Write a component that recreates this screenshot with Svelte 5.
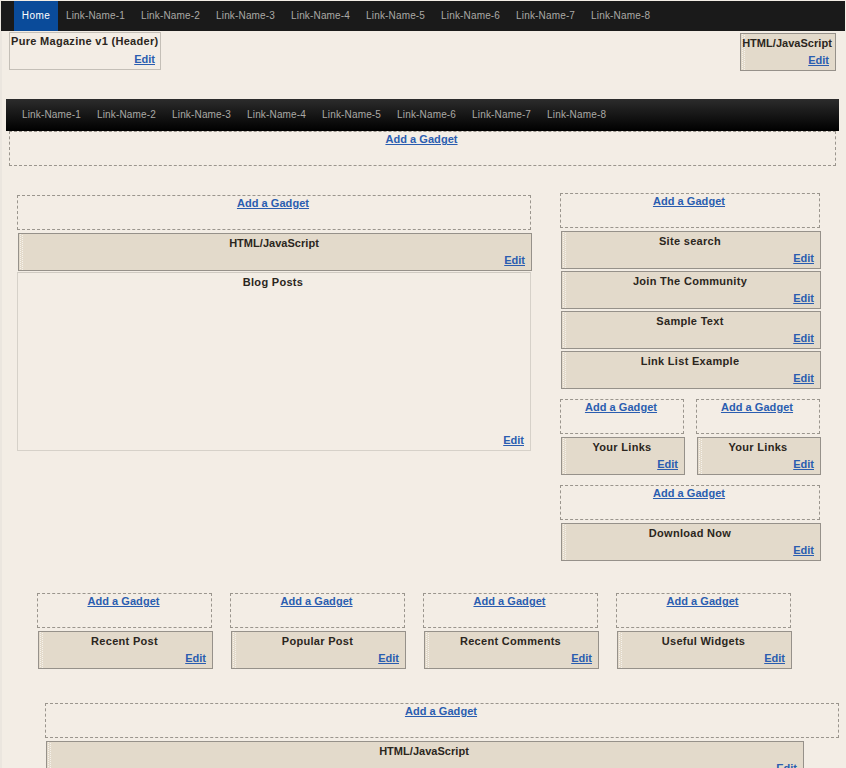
<script>
  const links = ['Link-Name-1', 'Link-Name-2', 'Link-Name-3', 'Link-Name-4', 'Link-Name-5', 'Link-Name-6', 'Link-Name-7', 'Link-Name-8'];
  const sideTop = ['Site search', 'Join The Community', 'Sample Text', 'Link List Example'];
  const footer = ['Recent Post', 'Popular Post', 'Recent Comments', 'Useful Widgets'];
</script>

{#snippet addGadget()}
  <div class="add"><a href="#add">Add a Gadget</a></div>
{/snippet}

{#snippet widget(title)}
  <div class="widget">
    <div class="title" class:tight={title === 'HTML/JavaScript'}>{title}</div>
    <a class="edit" href="#edit">Edit</a>
  </div>
{/snippet}

<div class="page">
  <nav class="topnav">
    <a class="home" href="#home">Home</a>
    {#each links as link}
      <a href="#link">{link}</a>
    {/each}
  </nav>

  <div class="head">
    <div class="header-box">
      <div class="title">Pure Magazine v1 (Header)</div>
      <a class="edit" href="#edit">Edit</a>
    </div>
    <div class="head-widget">
      {@render widget('HTML/JavaScript')}
    </div>
  </div>

  <nav class="subnav">
    {#each links as link}
      <a href="#link">{link}</a>
    {/each}
  </nav>

  <div class="cross">
    {@render addGadget()}
  </div>

  <div class="main">
    <div class="left">
      {@render addGadget()}
      {@render widget('HTML/JavaScript')}
      <div class="posts">
        <div class="title">Blog Posts</div>
        <a class="edit" href="#edit">Edit</a>
      </div>
    </div>

    <div class="right">
      {@render addGadget()}
      <div class="stack">
        {#each sideTop as title}
          {@render widget(title)}
        {/each}
      </div>
      <div class="pair">
        <div class="col">
          {@render addGadget()}
          {@render widget('Your Links')}
        </div>
        <div class="col">
          {@render addGadget()}
          {@render widget('Your Links')}
        </div>
      </div>
      <div class="col lower">
        {@render addGadget()}
        {@render widget('Download Now')}
      </div>
    </div>
  </div>

  <div class="footer">
    {#each footer as title}
      <div class="col">
        {@render addGadget()}
        {@render widget(title)}
      </div>
    {/each}
  </div>

  <div class="bottom">
    {@render addGadget()}
    <div class="bottom-widget">
      {@render widget('HTML/JavaScript')}
    </div>
  </div>
</div>

<style>
  :global(body) {
    margin: 0;
    background: #f3ede5;
  }

  .page {
    width: 846px;
    height: 768px;
    overflow: hidden;
    box-sizing: border-box;
    padding-top: 1px;
    background: #f3ede5;
    box-shadow: inset 2px 0 #ebe6df;
    font-family: "Liberation Sans", Arial, sans-serif;
    font-size: 11px;
    color: #2b2620;
  }

  a {
    text-decoration: none;
  }

  .topnav {
    display: flex;
    height: 30px;
    margin: 0 1px;
    padding-left: 13px;
    background: #1a1a1a;
  }

  .topnav a,
  .subnav a {
    display: block;
    padding: 0 8px;
    line-height: 30px;
    font-size: 10px;
    letter-spacing: 0.16px;
    color: #aaa9a5;
  }

  .topnav .home {
    width: 44px;
    box-sizing: border-box;
    padding: 0;
    text-align: center;
    letter-spacing: 0.5px;
    background: #0a4b9a;
    color: #fff;
  }

  .head {
    display: flex;
    justify-content: space-between;
    align-items: flex-start;
    height: 67px;
    padding: 1px 10px 0 9px;
  }

  .header-box {
    width: 152px;
    height: 38px;
    box-sizing: border-box;
    border: 1px solid #c4bfb7;
    padding: 1px 1px 0;
    background: #f3ede5;
  }

  .header-box .edit {
    margin-top: 3px;
  }

  .title {
    font-weight: 700;
    font-size: 11px;
    line-height: 15px;
    letter-spacing: 0.3px;
    text-align: center;
    white-space: nowrap;
  }

  .title.tight {
    letter-spacing: 0.03px;
  }

  .header-box .title {
    text-align: left;
  }

  .edit,
  .add a {
    font-weight: 700;
    font-size: 11px;
    line-height: 15px;
    color: #2a5db0;
    text-decoration: underline;
  }

  .edit {
    display: block;
    width: max-content;
    margin: 2px 4px 0 auto;
  }

  .subnav {
    display: flex;
    height: 32px;
    margin: 0 7px 0 6px;
    padding-left: 8px;
    background: linear-gradient(#2c2c2c, #1a1a1a 40%, #000);
  }

  .subnav a {
    line-height: 32px;
  }

  .cross {
    margin: 0 10px 0 9px;
  }

  .add {
    height: 35px;
    box-sizing: border-box;
    padding-right: 2px;
    border: 1px dashed #9a958d;
    text-align: center;
    line-height: 15px;
  }

  .add a {
    letter-spacing: 0.05px;
  }

  .widget {
    height: 38px;
    box-sizing: border-box;
    margin: 3px -1px 0 1px;
    padding: 2px 2px 0 0;
    border: 1px solid #96918a;
    background-color: #e3dacb;
    background-image:
      linear-gradient(#f6f2eb 50%, transparent 50%),
      linear-gradient(#f6f2eb 50%, transparent 50%);
    background-size: 1px 2px;
    background-position: 1px 0, 3px 1px;
    background-repeat: repeat-y;
  }

  .head-widget {
    width: 96px;
    margin-top: -2px;
  }

  .head-widget .widget {
    margin: 3px 0 0;
  }

  .main {
    display: flex;
    align-items: flex-start;
    padding-left: 17px;
    margin-top: 27px;
  }

  .left {
    width: 514px;
    margin-top: 2px;
  }

  .posts {
    height: 179px;
    box-sizing: border-box;
    margin-top: 1px;
    padding: 2px 2px 0 0;
    border: 1px solid #d6d1c9;
    border-top-color: #cfcac2;
    display: flex;
    flex-direction: column;
  }

  .posts .edit {
    margin-top: auto;
    margin-bottom: 2px;
  }

  .right {
    width: 260px;
    margin-left: 29px;
  }

  .stack .widget {
    margin-top: 2px;
  }

  .stack .widget:first-child {
    margin-top: 3px;
  }

  .pair {
    display: flex;
    gap: 12px;
    margin-top: 10px;
  }

  .col {
    flex: 1;
  }

  .lower {
    margin-top: 10px;
  }

  .footer {
    display: flex;
    gap: 18px;
    width: 754px;
    margin: 32px 0 0 37px;
  }

  .bottom {
    width: 794px;
    margin: 34px 0 0 45px;
  }

  .bottom-widget {
    width: 758px;
  }
</style>
